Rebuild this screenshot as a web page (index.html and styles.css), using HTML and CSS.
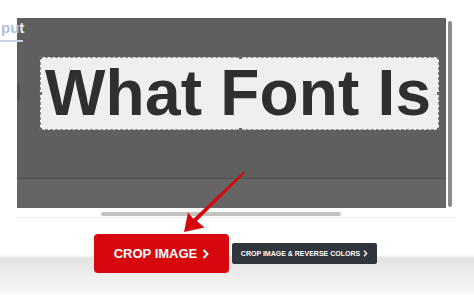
FILE: index.html
```html
<!DOCTYPE html>
<html lang="en">
<head>
<meta charset="UTF-8">
<title>Crop image</title>
<link rel="stylesheet" href="styles.css">
</head>
<body>
<div class="page">
  <div class="tab">pu<span class="tab-end">t</span></div>

  <div class="viewport">
    <div class="panel">
      <span class="grip"></span>
      <div class="crop-box">
        What Font Is
        <i class="h tl"></i><i class="h tm"></i><i class="h tr"></i>
        <i class="h ml"></i><i class="h mr"></i>
        <i class="h bl"></i><i class="h bm"></i><i class="h br"></i>
      </div>
    </div>
    <div class="vscroll"></div>
  </div>
  <div class="hscroll"></div>
  <div class="hline"></div>

  <div class="actions">
    <button class="btn btn-crop">CROP IMAGE
      <svg width="7" height="10" viewBox="0 0 7 10"><path d="M1.5 1l4 4-4 4" fill="none" stroke="#fff" stroke-width="2"/></svg>
    </button>
    <button class="btn btn-reverse">CROP IMAGE &amp; REVERSE COLORS
      <svg width="5" height="7" viewBox="0 0 5 7"><path d="M1 0.8l2.6 2.7L1 6.2" fill="none" stroke="#fff" stroke-width="1.4"/></svg>
    </button>
  </div>

  <svg class="arrow" width="474" height="295" viewBox="0 0 474 295">
    <path d="M243.5 171.5 L245 173 L193 225 L190 222 Z" fill="#d6080d"/>
    <path d="M184 232 L188 212.5 L193.5 219 L198 222 L204.5 227.5 Z" fill="#d6080d"/>
  </svg>
</div>
</body>
</html>
```

FILE: styles.css
```css
:root{
  --panel:#5f5f5f; --red:#d6080d; --dark:#30353b; --tab:#aebfe0;
}
body{margin:0;font-family:"Liberation Sans",Arial,sans-serif;background:#fff}
.page{position:relative;width:474px;height:295px;overflow:hidden;
  background:linear-gradient(to bottom,#fff 0,#fff 255px,#e3e3e3 258px,#f7f7f7 292px,#fbfbfb 295px)}

.tab{position:absolute;left:0;top:20px;width:22px;height:20px;padding-left:1px;
  font-size:15px;line-height:15px;font-weight:700;color:var(--tab);border-bottom:2px solid #c8d3e8;z-index:2}
.tab-end{color:#e6ecf6}

.viewport{display:flex;padding-top:18px;margin-left:17px}
.panel{position:relative;width:429px;height:190px;padding:39px 0 0 23px;box-sizing:border-box;
  background:linear-gradient(to bottom,var(--panel) 0,var(--panel) 160px,#4c4c4c 160px,#4c4c4c 161px,#656565 161px)}
.grip{position:absolute;left:0;top:66px;width:3px;height:16px;background:#515151;border-radius:0 2px 2px 0}
.vscroll{width:4px;height:186px;margin:3px 0 0 2px;background:#8a8a8a;border-radius:2px}

.crop-box{position:relative;width:399px;height:73px;box-sizing:border-box;padding-left:4px;
  background:#efefef;border:1px dashed #8c8c8c;
  font-size:64px;line-height:71px;font-weight:700;color:#2f2f2f;white-space:nowrap;letter-spacing:.2px}
.h{position:absolute;width:3px;height:3px;background:#666}
.tl{left:-2px;top:-2px}.tm{left:198px;top:-2px}.tr{right:-2px;top:-2px}
.ml{left:-2px;top:34px}.mr{right:-2px;top:34px}
.bl{left:-2px;bottom:-2px}.bm{left:198px;bottom:-2px}.br{right:-2px;bottom:-2px}

.hscroll{width:240px;height:4px;margin:4px 0 0 101px;background:#c2c2c2;border-radius:2px}
.hline{width:438px;height:1px;margin:1px 0 0 17px;background:#ececec}

.actions{display:flex;align-items:center;gap:3px;padding-left:94px;margin-top:16px}
.btn{display:flex;align-items:center;justify-content:center;border:none;color:#fff;font-family:inherit;font-weight:700;padding:0}
.btn-crop{width:135px;height:39px;background:var(--red);border-radius:4px;font-size:13px;gap:5px}
.btn-reverse{width:145px;height:21px;background:var(--dark);border-radius:2px;font-size:7px;gap:3px}

.arrow{position:absolute;left:0;top:0;pointer-events:none}
```
